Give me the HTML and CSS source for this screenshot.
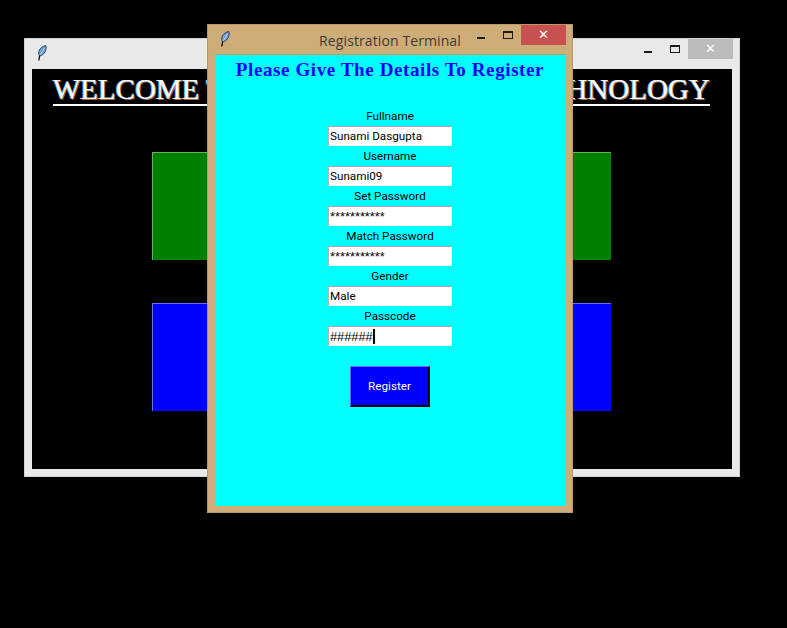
FILE: index.html
```html
<!DOCTYPE html>
<html lang="en">
<head>
<meta charset="utf-8">
<title>Registration Terminal</title>
<link rel="stylesheet" href="styles.css">
</head>
<body>
<svg class="defs" width="0" height="0" aria-hidden="true">
  <symbol id="feather" viewBox="0 0 10 16">
    <path d="M2.8 10 L1.8 15.5" stroke="#000" stroke-width="1.3" fill="none"/>
    <path d="M2.5 11 C0.4 7 2.5 2 8.9 0.5 C9.9 5 7.5 10 2.5 11 Z" fill="#6f9fd8" stroke="#1c2a44" stroke-width="0.8"/>
    <path d="M3.2 9.8 L7.6 2.8" stroke="#dce9f8" stroke-width="0.7" fill="none"/>
  </symbol>
</svg>

<section class="window back">
  <header class="titlebar">
    <svg class="feather"><use href="#feather"/></svg>
    <span class="title"></span>
    <div class="controls">
      <span class="min"></span>
      <span class="max"></span>
      <span class="close close-idle">✕</span>
    </div>
  </header>
  <div class="desk">
    <h1 class="banner"><span>Welcome To</span><span>Technology</span></h1>
    <div class="block green"></div>
    <div class="block blue"></div>
  </div>
</section>

<section class="window front">
  <header class="titlebar front-bar">
    <svg class="feather"><use href="#feather"/></svg>
    <span class="title">Registration Terminal</span>
    <div class="controls">
      <span class="min"></span>
      <span class="max"></span>
      <span class="close close-active">✕</span>
    </div>
  </header>
  <main class="panel">
    <h2 class="heading">Please Give The Details To Register</h2>
    <form class="form">
      <div class="label">Fullname</div>
      <div class="entry">Sunami Dasgupta</div>
      <div class="label">Username</div>
      <div class="entry">Sunami09</div>
      <div class="label">Set Password</div>
      <div class="entry mask">***********</div>
      <div class="label">Match Password</div>
      <div class="entry mask">***********</div>
      <div class="label">Gender</div>
      <div class="entry">Male</div>
      <div class="label">Passcode</div>
      <div class="entry mask">######<span class="caret"></span></div>
      <div class="submit">Register</div>
    </form>
  </main>
</section>
</body>
</html>
```
FILE: styles.css
```css
html, body {
  margin: 0;
  height: 100%;
  background: #000;
  overflow: hidden;
}
.defs { position: absolute; }

.window {
  position: absolute;
  box-sizing: border-box;
  display: flex;
  flex-direction: column;
}
.back {
  left: 24px;
  top: 38px;
  width: 716px;
  height: 439px;
  background: #e9e9e9;
  border: 1px solid #d2d2d2;
}
.front {
  left: 207px;
  top: 24px;
  width: 366px;
  height: 489px;
  background: #cfad78;
  border: 1px solid #b8986a;
}

.titlebar {
  display: grid;
  grid-template-columns: 1fr auto 1fr;
  align-items: start;
  flex: none;
  height: 30px;
}
.front-bar { height: 29px; }

.feather { width: 10px; height: 16px; margin: 6px 0 0 12px; display: block; }
.title {
  font: 14px/17px "Open Sans", "Noto Sans", sans-serif;
  letter-spacing: 0.1px;
  color: #3b3b35;
  margin-top: 7px;
  white-space: nowrap;
}
.controls {
  display: flex;
  justify-content: flex-end;
  align-items: flex-start;
  margin-right: 6px;
}
.min {
  width: 8px;
  height: 2px;
  background: #1a1a1a;
  margin-top: 12px;
  margin-right: 18px;
}
.max {
  box-sizing: border-box;
  width: 10px;
  height: 8px;
  border: 1px solid #1a1a1a;
  border-top-width: 2px;
  margin-top: 6px;
  margin-right: 8px;
}
.close {
  width: 45px;
  height: 20px;
  color: #fff;
  font: bold 13px/20px "DejaVu Sans", sans-serif;
  text-align: center;
}
.close-idle { background: #bcbcbc; }
.close-active { background: #c75050; }

.desk {
  flex: 1;
  margin: 0 7px 7px 7px;
  background: #000;
  padding: 0 22px 0 21px;
}
.banner {
  display: flex;
  justify-content: space-between;
  margin: 0;
  height: 35px;
  font: normal 29px/40px "Liberation Serif", serif;
  text-transform: uppercase;
  color: #fff;
  text-shadow: -1px 0 #5fa8e8, 1px 1px #a8683c;
  border-bottom: 2px solid #fff;
}
.block {
  box-sizing: border-box;
  width: 459px;
  height: 108px;
  margin-left: 99px;
  border-style: solid;
  border-width: 1px 0 0 1px;
}
.green {
  margin-top: 46px;
  background: #008000;
  border-color: #66b366;
}
.blue {
  margin-top: 43px;
  background: #0000ff;
  border-color: #6a6aff;
}

.panel {
  flex: 1;
  margin: 0 6px 6px 7px;
  padding-right: 1px;
  background: #00ffff;
  border-top: 1px solid #b8a070;
  display: flex;
  flex-direction: column;
  align-items: center;
}
.heading {
  margin: 4px 0 0;
  font: bold 19px/22px "Liberation Serif", serif;
  letter-spacing: 0.6px;
  color: #0000ff;
  white-space: nowrap;
}
.form {
  margin-top: 25px;
  display: flex;
  flex-direction: column;
  align-items: center;
  font: 11.7px/20px Roboto, "Open Sans", sans-serif;
  color: #000;
}
.label { height: 20px; }
.entry {
  box-sizing: border-box;
  width: 124px;
  height: 20px;
  background: #fff;
  border-top: 1px solid #a9a9a9;
  border-left: 1px solid #b4b4b4;
  padding-left: 1px;
  line-height: 18px;
  white-space: nowrap;
}
.mask { font: 12.8px/19px "Liberation Sans", sans-serif; }
.caret {
  display: inline-block;
  width: 2px;
  height: 15px;
  background: #000;
  vertical-align: -3px;
}
.submit {
  box-sizing: border-box;
  width: 80px;
  height: 41px;
  margin-top: 20px;
  background: #0000ff;
  color: #fff;
  text-align: center;
  line-height: 39px;
  border-style: solid;
  border-width: 1px 2px 2px 1px;
  border-color: #6a6aff #000 #000 #6a6aff;
}
```
